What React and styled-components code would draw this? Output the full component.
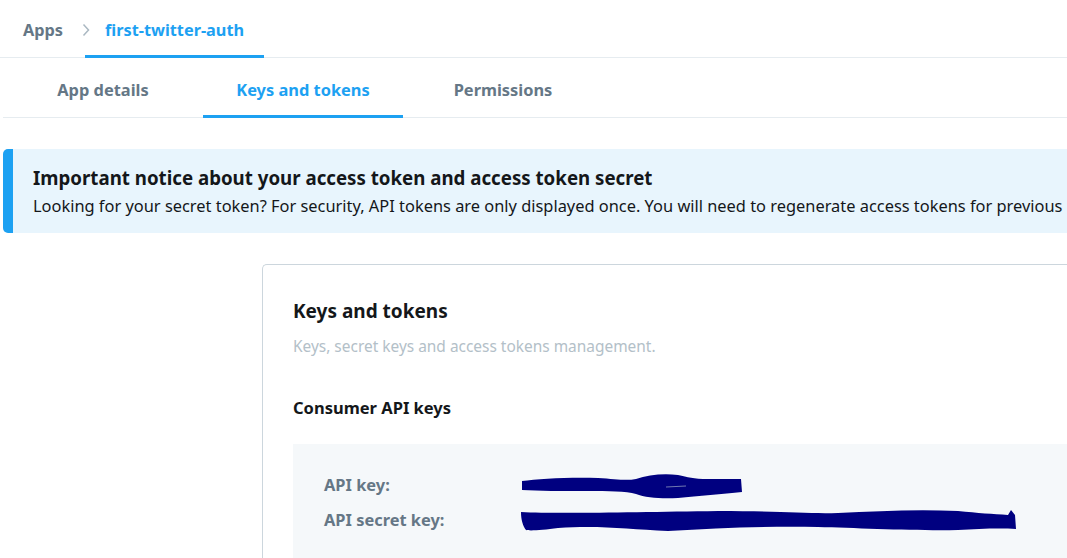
import React from "react";
import styled, { createGlobalStyle } from "styled-components";

const Global = createGlobalStyle`
  html, body {
    margin: 0;
    padding: 0;
    background: #fff;
    overflow: hidden;
  }
  body {
    font-family: "Noto Sans", "Open Sans", sans-serif;
    color: #14171a;
  }
`;

const Page = styled.div`
  width: 1067px;
  height: 558px;
  overflow: hidden;
`;

const Breadcrumb = styled.nav`
  display: flex;
  align-items: stretch;
  height: 58px;
  border-bottom: 1px solid #e6ecf0;
  padding-left: 23px;
  box-sizing: border-box;
`;

const Crumb = styled.span`
  display: flex;
  align-items: center;
  font-size: 16.3px;
  font-weight: 700;
  color: ${(p) => (p.$active ? "#1da1f2" : "#657786")};
  padding: ${(p) => (p.$active ? "0 20px" : "0")};
  margin-left: ${(p) => (p.$active ? "-6px" : "0")};
  border-bottom: 3px solid ${(p) => (p.$active ? "#1da1f2" : "transparent")};
  padding-top: 4px;
  margin-bottom: -1px;
`;

const Chevron = styled.span`
  display: flex;
  align-items: center;
  margin-left: 18px;
  padding-top: 2px;
`;

const Tabs = styled.div`
  display: flex;
  height: 60px;
  margin-left: 3px;
  border-bottom: 1px solid #e6ecf0;
  box-sizing: border-box;
`;

const Tab = styled.div`
  width: 200px;
  display: flex;
  align-items: center;
  justify-content: center;
  font-size: 16.4px;
  font-weight: 700;
  color: ${(p) => (p.$active ? "#1da1f2" : "#657786")};
  border-bottom: 3px solid ${(p) => (p.$active ? "#1da1f2" : "transparent")};
  margin-bottom: -1px;
  padding-top: 6px;
`;

const Notice = styled.div`
  margin: 31px 0 0 3px;
  height: 84px;
  box-sizing: border-box;
  background: #e8f5fd;
  border-left: 10px solid #1da1f2;
  border-radius: 5px 0 0 5px;
  padding: 16px 0 0 20px;
  white-space: nowrap;
`;

const NoticeTitle = styled.div`
  font-size: 18.7px;
  font-weight: 700;
  color: #14171a;
  line-height: 26px;
`;

const NoticeText = styled.div`
  font-size: 16.4px;
  color: #14171a;
  line-height: 30px;
`;

const Card = styled.section`
  margin: 31px 0 0 262px;
  border: 1px solid #ccd6dd;
  border-right: none;
  border-radius: 5px 0 0 0;
  padding: 33px 0 0 30px;
  height: 320px;
`;

const CardTitle = styled.h2`
  margin: 0;
  font-size: 19px;
  font-weight: 700;
  line-height: 26px;
  color: #14171a;
`;

const CardSub = styled.p`
  margin: 11px 0 0;
  font-size: 15.45px;
  line-height: 22px;
  color: #b3c0c8;
`;

const SectionTitle = styled.h3`
  margin: 39px 0 0;
  font-size: 16.5px;
  font-weight: 700;
  line-height: 24px;
  color: #14171a;
`;

const KeyBox = styled.div`
  margin-top: 24px;
  background: #f5f8fa;
  padding: 29px 0 30px 31px;
  display: grid;
  grid-template-columns: 196px 1fr;
  row-gap: 11px;
`;

const KeyLabel = styled.div`
  font-size: 16.4px;
  font-weight: 700;
  color: #657786;
  line-height: 24px;
`;

const KeyValue = styled.div`
  height: 24px;
  position: relative;
`;

const Scribble = styled.svg`
  position: absolute;
  left: -2px;
  top: -2px;
  overflow: visible;
`;

function ApiKeyScribble() {
  return (
    <Scribble width="230" height="32" viewBox="0 0 230 32">
      <path
        fill="#000080"
        d="M4 10 C20 8 50 6 80 7 C98 8 108 10 118 8 C130 4 145 2 160 4 C170 6 175 8 190 8 L223 8 L224 21 C205 23 180 25 160 27 C145 28 128 27 118 23 C108 20 90 20 70 20 C45 20 20 20 4 19 Z"
      />
      <path d="M148 16 L168 15" stroke="#6f78b0" strokeWidth="1.2" />
    </Scribble>
  );
}

function SecretScribble() {
  return (
    <Scribble width="505" height="32" viewBox="0 0 505 32">
      <path
        fill="#000080"
        d="M3 6 C40 8 120 6 200 5 C260 5 290 8 320 7 C360 5 400 3 440 5 C460 7 475 8 490 9 L493 4 L497 9 L498 23 C480 22 460 23 440 24 C400 25 340 22 300 21 C250 20 200 22 150 25 C110 23 80 19 40 22 C25 24 12 25 8 24 C5 20 3 14 3 6 Z"
      />
    </Scribble>
  );
}

export default function App() {
  return (
    <Page>
      <Global />
      <Breadcrumb>
        <Crumb>Apps</Crumb>
        <Chevron>
          <svg width="10" height="16" viewBox="0 0 10 16">
            <path d="M2.5 2.5 L7.5 8 L2.5 13.5" fill="none" stroke="#aab8c2" strokeWidth="1.5" />
          </svg>
        </Chevron>
        <Crumb $active>first-twitter-auth</Crumb>
      </Breadcrumb>
      <Tabs>
        <Tab>App details</Tab>
        <Tab $active>Keys and tokens</Tab>
        <Tab>Permissions</Tab>
      </Tabs>
      <Notice>
        <NoticeTitle>Important notice about your access token and access token secret</NoticeTitle>
        <NoticeText>
          Looking for your secret token? For security, API tokens are only displayed once. You will need to regenerate access tokens for previous
        </NoticeText>
      </Notice>
      <Card>
        <CardTitle>Keys and tokens</CardTitle>
        <CardSub>Keys, secret keys and access tokens management.</CardSub>
        <SectionTitle>Consumer API keys</SectionTitle>
        <KeyBox>
          <KeyLabel>API key:</KeyLabel>
          <KeyValue>
            <ApiKeyScribble />
          </KeyValue>
          <KeyLabel>API secret key:</KeyLabel>
          <KeyValue>
            <SecretScribble />
          </KeyValue>
        </KeyBox>
      </Card>
    </Page>
  );
}
